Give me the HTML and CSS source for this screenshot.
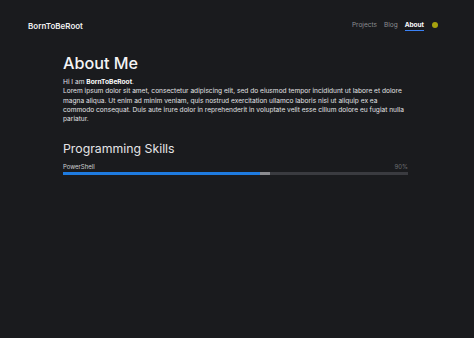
FILE: index.html
```html
<!DOCTYPE html>
<html lang="en">
<head>
<meta charset="utf-8">
<title>About</title>
<link rel="stylesheet" href="styles.css">
</head>
<body>
<header class="header">
  <div class="brand">BornToBeRoot</div>
  <nav class="nav">
    <a class="nav-link">Projects</a>
    <a class="nav-link">Blog</a>
    <a class="nav-link active">About</a>
    <span class="theme-dot"></span>
  </nav>
</header>
<main class="content">
  <h1 class="title">About Me</h1>
  <p class="text">Hi I am <strong>BornToBeRoot</strong>.<br>Lorem ipsum dolor sit amet, consectetur adipiscing elit, sed do eiusmod tempor incididunt ut labore et dolore magna aliqua. Ut enim ad minim veniam, quis nostrud exercitation ullamco laboris nisi ut aliquip ex ea commodo consequat. Duis aute irure dolor in reprehenderit in voluptate velit esse cillum dolore eu fugiat nulla pariatur.</p>
  <h2 class="subtitle">Programming Skills</h2>
  <div class="skill">
    <div class="skill-head"><span class="skill-name">PowerShell</span><span class="skill-pct">90%</span></div>
    <div class="bar"><div class="bar-fill" style="width:57%"></div><div class="bar-shine"></div></div>
  </div>
</main>
</body>
</html>
```
FILE: styles.css
```css
html, body { margin: 0; padding: 0; }
body {
  background: #1a1b1e;
  color: #e4e4e6;
  font-family: "Inter", "DejaVu Sans", sans-serif;
  width: 474px;
  height: 338px;
  overflow: hidden;
}
.header {
  display: flex;
  justify-content: space-between;
  align-items: center;
  padding: 18px 36px 0 28px;
  height: 14px;
}
.brand { font-size: 8px; font-weight: 600; color: #f0f0f0; margin-top: 2px; }
.nav { display: flex; align-items: center; gap: 7px; }
.nav-link { font-size: 6.5px; color: #8d8e92; }
.nav-link.active { color: #ffffff; font-weight: 700; border-bottom: 1px solid #3b82f6; padding-bottom: 1px; margin-top: 2px; }
.theme-dot { width: 6px; height: 6px; border-radius: 50%; background: #a6a20f; margin-left: 1px; }
.content { margin: 0 66px 0 63px; padding-top: 21px; }
.title { font-size: 16.2px; font-weight: 500; margin: 0 0 5px; color: #f4f4f5; }
.text { font-size: 6.6px; line-height: 9.3px; margin: 0; color: #e2e2e5; }
.text strong { font-weight: 700; color: #fff; }
.subtitle { font-size: 12.3px; font-weight: 400; margin: 17px 0 7px; color: #e4e4e6; }
.skill-head { display: flex; justify-content: space-between; font-size: 6px; }
.skill-name { color: #d0d0d4; }
.skill-pct { color: #6b6c70; }
.bar { position: relative; display: flex; height: 3px; background: #3a3b40; margin-top: 2px; }
.bar-fill { background: #1e7be0; height: 100%; }
.bar-shine { width: 10px; height: 100%; background: #8a8b90; }
```
